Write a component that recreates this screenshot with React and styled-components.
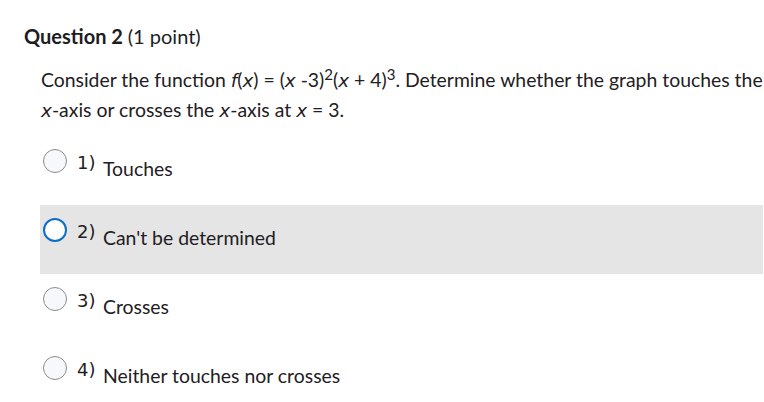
import React from 'react'
import styled, { createGlobalStyle } from 'styled-components'

const Global = createGlobalStyle`
body{
margin:0;
background:#fff;
font-family:Lato,"Open Sans",sans-serif;
color:#1f2023;
}
`
const Wrapper = styled.div`
width:764px;
height:402px;
overflow:hidden;
padding:24px 0 0 24px;
box-sizing:border-box;
`
const Title = styled.h2`
margin:0;
font-size:20px;
line-height:24px;
font-weight:700;
color:#1d1d1f;
`
const Points = styled.span`
font-weight:400;
`
const Stem = styled.p`
margin:17px 0 0 17px;
font-size:19.4px;
line-height:29px;
white-space:nowrap;
`
const M = styled.i`
font-family:"DejaVu Sans",Verdana,sans-serif;
font-size:18.4px;
`
const Sup = styled.sup`
font-size:15px;
line-height:0;
`
const List = styled.div`
margin:11px 0 0 16px;
width:723px;
`
const Row = styled.label`
display:flex;
align-items:flex-start;
height:69px;
padding:13px 0 0 3px;
box-sizing:border-box;
background:${p => p.$active ? '#e5e5e5' : 'transparent'};
`
const Radio = styled.span`
width:24px;
height:24px;
box-sizing:border-box;
border-radius:50%;
border:${p => p.$active ? '2.5px solid #0b6fca' : '1px solid #8b8b8b'};
background:${p => p.$active ? '#fff' : '#f7f8fb'};
flex:none;
`
const Num = styled.span`
font-family:"DejaVu Sans",Verdana,sans-serif;
font-size:18px;
line-height:20px;
margin:4px 0 0 10px;
width:26px;
`
const Label = styled.span`
font-size:19.4px;
line-height:22px;
margin-top:9px;
`

const options = ['Touches', "Can't be determined", 'Crosses', 'Neither touches nor crosses']

export default function App(){
    return(
        <Wrapper>
            <Global/>
            <Title>Question 2 <Points>(1 point)</Points></Title>
            <Stem>
                Consider the function <M>f</M>(<M>x</M>) = (<M>x</M> -3)<Sup>2</Sup>(<M>x</M> + 4)<Sup>3</Sup>. Determine whether the graph touches the<br/>
                <M>x</M>-axis or crosses the <M>x</M>-axis at <M>x</M> = 3.
            </Stem>
            <List>
                {options.map((o,i)=>(
                    <Row key={o} $active={i===1}>
                        <Radio $active={i===1}/>
                        <Num>{i+1})</Num>
                        <Label>{o}</Label>
                    </Row>
                ))}
            </List>
        </Wrapper>
    )
}
